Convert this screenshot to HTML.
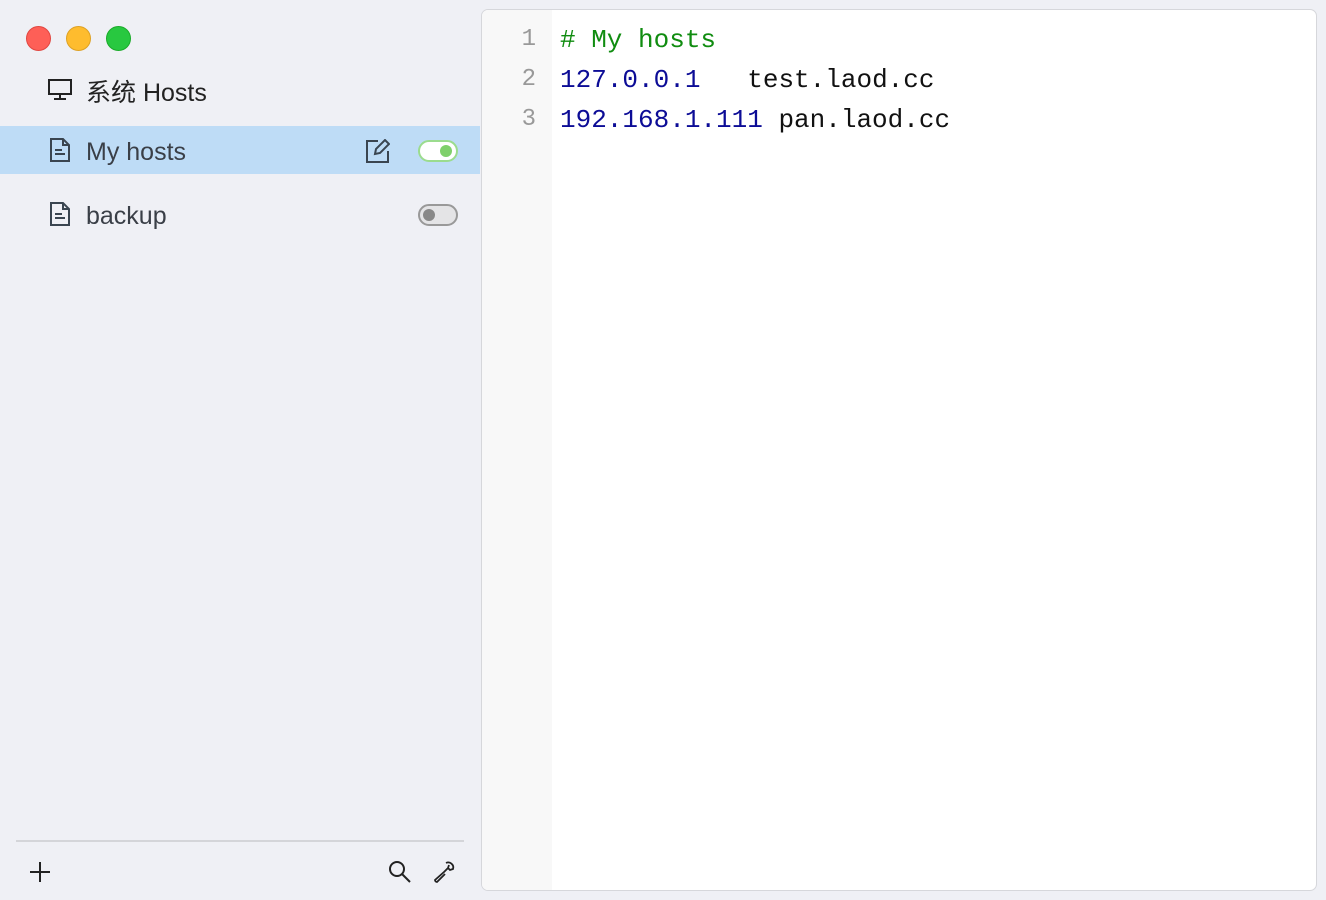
<!DOCTYPE html>
<html><head><meta charset="utf-8"><style>
body{margin:0;width:1326px;height:900px;background:#eff0f5;font-family:"Liberation Sans","Noto Sans CJK SC",sans-serif;position:relative;overflow:hidden;color:#333}
.dot{position:absolute;top:26px;width:24px;height:24px;border-radius:50%}
.row{position:absolute;left:0;width:480px;height:48px;font-size:25px;color:#3a3f47}
.row span{position:absolute;left:86px;top:12px}
.ic{position:absolute}
.tog{position:absolute;left:418px;width:36px;height:18px;border-radius:11px;border:2px solid}
.tog i{position:absolute;top:3px;width:12px;height:12px;border-radius:50%}
.ed{position:absolute;left:481px;top:9px;width:834px;height:880px;background:#fff;border:1px solid #d6d7db;border-radius:7px;overflow:hidden}
.gut{position:absolute;left:0;top:0;width:70px;height:100%;background:#f8f8f8}
.code{position:absolute;left:0;top:10px;font-family:"Liberation Mono",monospace;font-size:26px;line-height:40px}
.ln{position:absolute;width:54px;text-align:right;color:#999;font-size:24px}
.tx{position:absolute;left:78px;white-space:pre;color:#111}
</style></head><body>
<div class="dot" style="left:26px;background:#fe5f57;border:1px solid #e14640;width:23px;height:23px"></div>
<div class="dot" style="left:66px;background:#febc2e;border:1px solid #dea123;width:23px;height:23px"></div>
<div class="dot" style="left:106px;background:#28c840;border:1px solid #1aab29;width:23px;height:23px"></div>

<div class="row" style="top:66px;color:#222"><svg class="ic" style="left:48px;top:13px" width="24" height="22" viewBox="0 0 24 22" fill="none" stroke="#222" stroke-width="2"><rect x="1" y="1" width="22" height="14"/><path d="M12 15v5M6 20h12"/></svg><span style="top:7px">系统 Hosts</span></div>

<div class="row" style="top:126px;background:#bedcf6"><svg class="ic" style="left:50px;top:12px" width="20" height="24" viewBox="0 0 20 24" fill="none" stroke="#3a4550" stroke-width="2"><path d="M1 1h12l6 6v16H1z M13 1v6h6 M5 12h7 M5 16h10"/></svg><span>My hosts</span>
<svg class="ic" style="left:366px;top:13px" width="24" height="24" viewBox="0 0 24 24" fill="none" stroke="#3a4550" stroke-width="2"><path d="M12 2H1v21h21V12 M9 15l1-5L19 1l4 4-9 9z"/></svg>
<div class="tog" style="top:14px;background:#fff;border-color:#9bdc8e"><i style="left:20px;background:#7fd06b"></i></div></div>

<div class="row" style="top:190px"><svg class="ic" style="left:50px;top:12px" width="20" height="24" viewBox="0 0 20 24" fill="none" stroke="#3a4550" stroke-width="2"><path d="M1 1h12l6 6v16H1z M13 1v6h6 M5 12h7 M5 16h10"/></svg><span>backup</span>
<div class="tog" style="top:14px;background:#e4e4e6;border-color:#999"><i style="left:3px;background:#888"></i></div></div>

<div style="position:absolute;left:16px;top:840px;width:448px;height:2px;background:#d4d5d9"></div>
<svg class="ic" style="left:29px;top:861px" width="22" height="22" viewBox="0 0 22 22" stroke="#222" stroke-width="2"><path d="M11 1v20M1 11h20"/></svg>
<svg class="ic" style="left:388px;top:860px" width="24" height="24" viewBox="0 0 24 24" fill="none" stroke="#222" stroke-width="2"><circle cx="9" cy="9" r="7"/><path d="M14 14l8 8"/></svg>
<svg class="ic" style="left:432px;top:860px" width="24" height="24" viewBox="0 0 24 24" fill="none" stroke="#222" stroke-width="1.8"><path d="M14 3a5 5 0 0 1 7 6l-3 1-2-2 1-3 M16 8l-4 4 M12 12L3 20a2 2 0 0 0 2 2l8-8"/></svg>

<div class="ed"><div class="gut"></div>
<div class="code">
<div class="ln" style="top:0">1</div><div class="tx" style="top:0;color:#108c10"># My hosts</div>
<div class="ln" style="top:40px">2</div><div class="tx" style="top:40px"><span style="color:#0c0c96">127.0.0.1</span>   test.laod.cc</div>
<div class="ln" style="top:80px">3</div><div class="tx" style="top:80px"><span style="color:#0c0c96">192.168.1.111</span> pan.laod.cc</div>
</div></div>
</body></html>
